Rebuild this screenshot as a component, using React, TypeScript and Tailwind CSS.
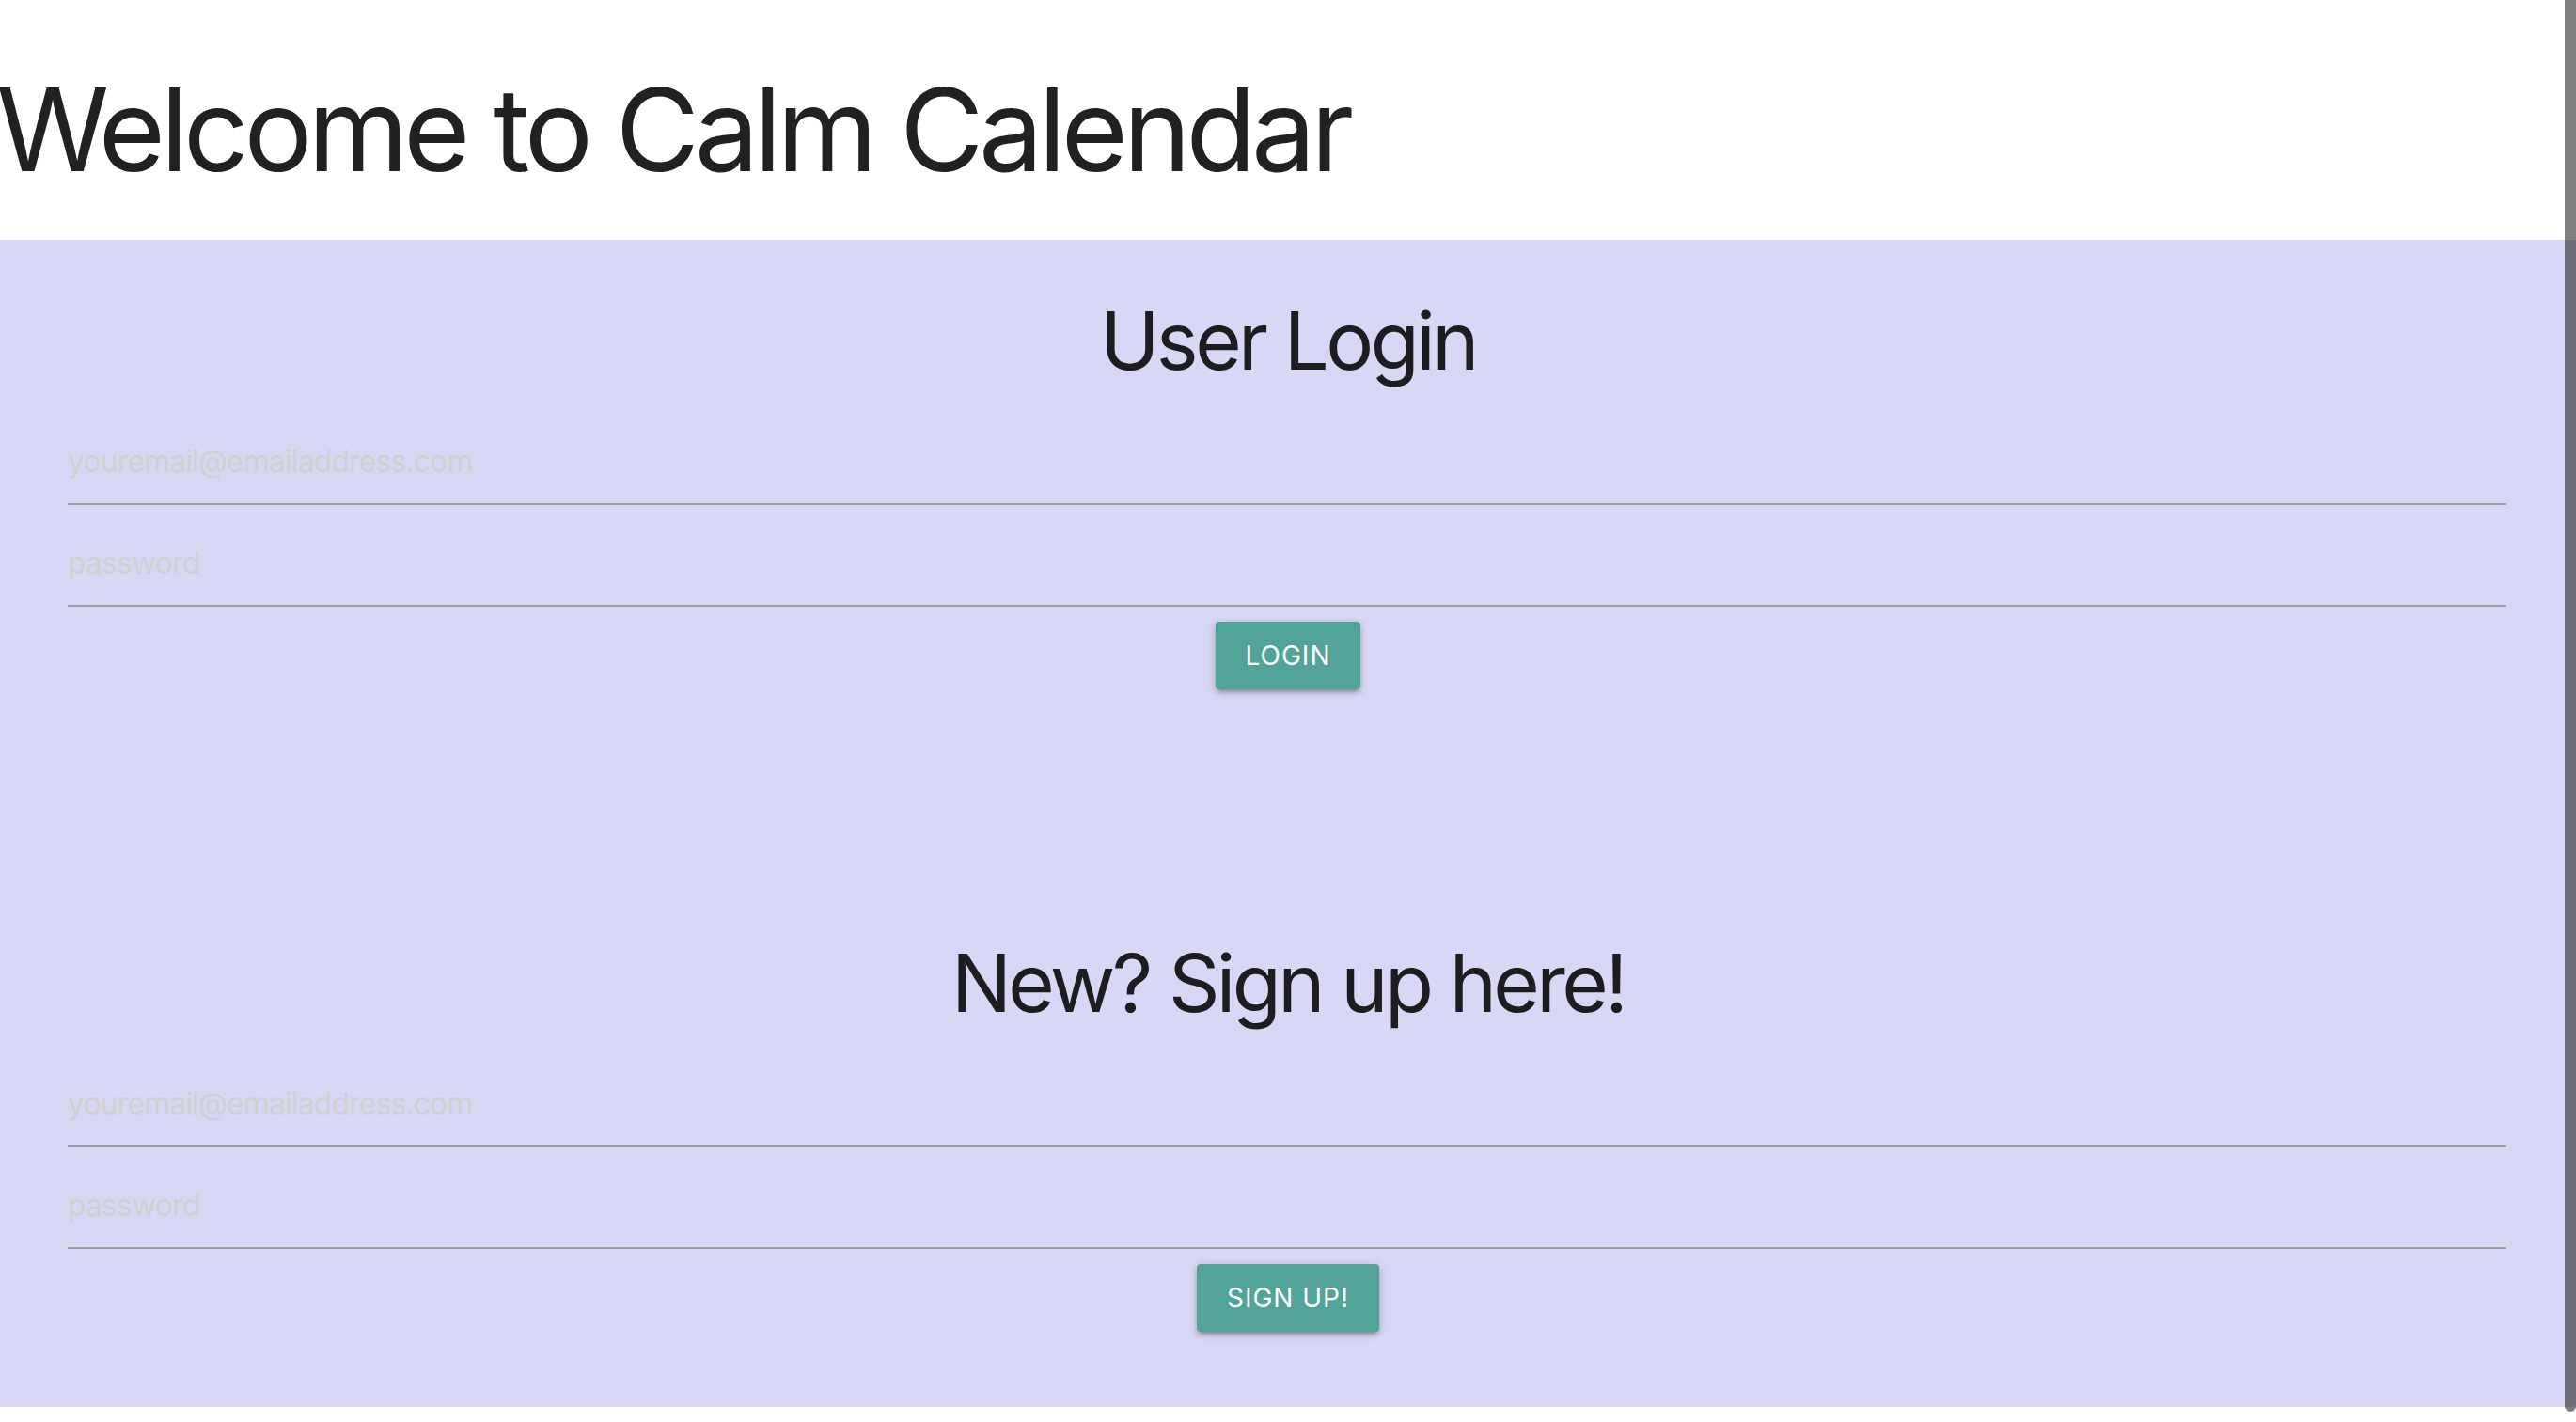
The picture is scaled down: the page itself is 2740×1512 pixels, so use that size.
import React from "react";

const font = { fontFamily: "Inter, 'Noto Sans', sans-serif" };

function Field({ placeholder, type }: { placeholder: string; type: string }) {
  return (
    <input
      type={type}
      placeholder={placeholder}
      className="block w-full h-[108px] pt-[16px] bg-transparent border-0 border-b-2 border-solid border-[#9e9e9e] text-[32px] tracking-[-0.9px] text-[#212121] outline-none placeholder:text-[#d1d1d1] [font-family:Inter,sans-serif]"
    />
  );
}

function Section({ title, button }: { title: string; button: string }) {
  return (
    <section className="flex flex-col items-center">
      <h2 className="text-[85px] leading-[100px] font-normal text-[#1d1c21] m-0 tracking-[-3.6px]">{title}</h2>
      <form className="w-full mt-[16px] flex flex-col items-center" onSubmit={(e) => e.preventDefault()}>
        <div className="w-full pl-[72px] pr-[74px]">
          <Field placeholder="youremail@emailaddress.com" type="email" />
          <Field placeholder="password" type="password" />
        </div>
        <button
          type="submit"
          className="mt-[16px] h-[72px] px-[32px] rounded-[4px] bg-[#52a399] text-white text-[28px] tracking-[1px] uppercase shadow-[0_4px_4px_0_rgba(0,0,0,0.14),0_6px_2px_-4px_rgba(0,0,0,0.12),0_2px_10px_0_rgba(0,0,0,0.2)] [font-family:Inter,sans-serif]"
        >
          {button}
        </button>
      </form>
    </section>
  );
}

export default function App() {
  return (
    <div className="relative min-h-[1512px] bg-white" style={font}>
      <header className="h-[255px] pt-[63px] bg-white">
        <h1 className="m-0 -ml-[4px] text-[122px] leading-[150px] font-normal text-[#212121] tracking-[-5.2px] whitespace-nowrap">
          Welcome to Calm Calendar
        </h1>
      </header>
      <main className="bg-[#d8d8f6] pt-[58px] pb-[80px] flex flex-col gap-[263px]">
        <Section title="User Login" button="Login" />
        <Section title="New? Sign up here!" button="Sign up!" />
      </main>
      <div className="fixed top-0 right-0 w-[12px] h-[1501px] bg-black/50 rounded-b-[6px]" />
    </div>
  );
}
